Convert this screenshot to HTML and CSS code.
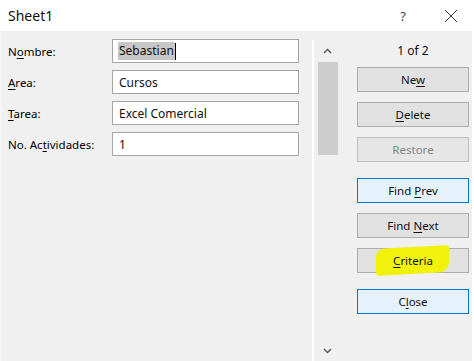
FILE: index.html
```html
<!DOCTYPE html>
<html>
<head>
<title>Sheet1</title>
<link rel="stylesheet" href="styles.css">
</head>
<body>

<div class="titlebar">
	<span class="title">Sheet1</span>
	<span class="help">?</span>
	<span class="close">
		<svg width="14" height="14" viewBox="0 0 14 14"><path d="M1 1 L13 13 M13 1 L1 13" stroke="#333" stroke-width="1" fill="none"/></svg>
	</span>
</div>

<div class="dlg">
	<div class="fields">
		<div class="row">
			<label>N<u>o</u>mbre:</label>
			<div class="box"><span class="sel">Sebastian</span><span class="caret"></span></div>
		</div>
		<div class="row">
			<label><u>A</u>rea:</label>
			<div class="box">Cursos</div>
		</div>
		<div class="row">
			<label><u>T</u>area:</label>
			<div class="box">Excel Comercial</div>
		</div>
		<div class="row">
			<label>No. Ac<u>t</u>ividades:</label>
			<div class="box">1</div>
		</div>
	</div>

	<div class="scroll">
		<div class="arrow up">
			<svg width="9" height="6" viewBox="0 0 9 6"><path d="M1 5 L4.5 1.5 L8 5" stroke="#555" stroke-width="1.4" fill="none"/></svg>
		</div>
		<div class="thumb"></div>
		<div class="track"></div>
		<div class="arrow down">
			<svg width="9" height="6" viewBox="0 0 9 6"><path d="M1 1 L4.5 4.5 L8 1" stroke="#555" stroke-width="1.4" fill="none"/></svg>
		</div>
	</div>

	<div class="side">
		<div class="count">1 of 2</div>
		<div class="btn"><span>Ne<u>w</u></span></div>
		<div class="btn"><span><u>D</u>elete</span></div>
		<div class="btn off"><span>Restore</span></div>
		<div class="btn def gap"><span>Find <u>P</u>rev</span></div>
		<div class="btn"><span>Find <u>N</u>ext</span></div>
		<div class="btn"><span class="mark"><span class="ink"></span><span class="txt"><u>C</u>riteria</span></span></div>
		<div class="btn def gap"><span>C<u>l</u>ose</span></div>
	</div>
</div>

</body>
</html>
```

FILE: styles.css
```css
body {
	margin: 0px;
	padding: 0px;
	background-color: #FFF;
	font-family: "Noto Sans", "Open Sans", sans-serif;
	font-size: 11.5px;
	color: #000;
	width: 474px;
	height: 361px;
	overflow: hidden;
}

u {
	text-decoration: underline;
	text-underline-offset: 2px;
}

/* title bar */

.titlebar {
	height: 31px;
	display: flex;
	align-items: center;
	padding: 0px 0px 0px 8px;
}

.title {
	font-size: 14px;
	color: #111;
	flex: 1;
	margin-top: -1px;
}

.help {
	font-size: 13px;
	color: #444;
	width: 20px;
	margin-right: 31px;
	text-align: center;
}

.close {
	width: 14px;
	margin-right: 16px;
	display: flex;
}

/* dialog body */

.dlg {
	display: flex;
	height: 330px;
	margin-right: 2px;
	background-color: #F0F0F0;
	border-left: 2px solid #F5F5F5;
}

.fields {
	width: 310px;
	padding-top: 8px;
	display: flex;
	flex-direction: column;
	gap: 7px;
}

.row {
	display: flex;
	align-items: center;
	height: 24px;
}

.row label {
	width: 104px;
	padding-left: 6px;
	white-space: nowrap;
}

.box {
	width: 179px;
	height: 22px;
	border: 1px solid #A5A5A5;
	background-color: #FFF;
	padding-left: 6px;
	line-height: 21px;
	display: flex;
	align-items: center;
	color: #111;
	font-size: 12px;
}

.sel {
	background-color: #C7C7C7;
	line-height: 18px;
	margin-left: -1px;
	padding: 0px 1px;
}

.caret {
	width: 1px;
	height: 17px;
	background-color: #000;
}

/* scrollbar */

.scroll {
	width: 27px;
	margin-top: 9px;
	border-left: 2px solid #FFF;
	display: flex;
	flex-direction: column;
	align-items: center;
	background-color: #F0F0F0;
}

.arrow {
	height: 22px;
	display: flex;
	align-items: center;
	justify-content: center;
}

.thumb {
	width: 20px;
	height: 93px;
	background-color: #CDCDCD;
}

.track {
	flex: 1;
}

.arrow.down {
	height: 20px;
}

/* buttons */

.side {
	flex: 1;
	padding: 12px 3px 0px 16px;
	display: flex;
	flex-direction: column;
	gap: 10px;
}

.count {
	text-align: center;
	height: 16px;
	line-height: 16px;
	margin-bottom: -2px;
	color: #111;
	font-size: 12px;
}

.btn {
	height: 23px;
	border: 1px solid #ADADAD;
	background-color: #E1E1E1;
	display: flex;
	align-items: center;
	justify-content: center;
	color: #111;
}

.btn.off {
	color: #838383;
	border-color: #BFBFBF;
	background-color: #E6E6E6;
}

.btn.def {
	border-color: #0078D7;
	background-color: #E5F1FB;
}

.btn.gap {
	margin-top: 6px;
}

.mark {
	position: relative;
	display: inline-block;
}

.ink {
	position: absolute;
	left: -17px;
	right: -16px;
	top: -6px;
	bottom: -6px;
	background-color: #F1F10C;
	border-radius: 8px 3px 10px 4px;
	transform: skewY(-3deg);
}

.txt {
	position: relative;
}
```
